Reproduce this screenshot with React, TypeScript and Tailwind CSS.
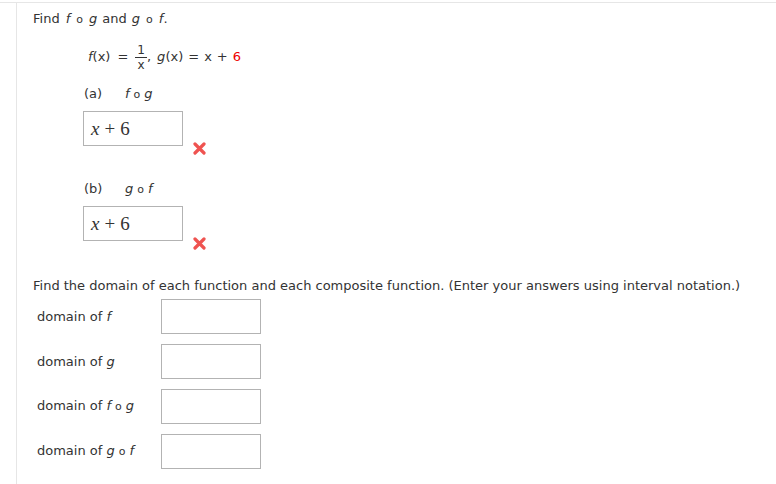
const font = { fontFamily: '"DejaVu Sans", Verdana, sans-serif' }

const Cross = () => (
  <svg width="13" height="13" viewBox="0 0 13 13" className="shrink-0">
    <path d="M2 2L11 11M11 2L2 11" stroke="#ef5350" strokeWidth={3.2} strokeLinecap="round" />
  </svg>
)

const MathAnswer = () => (
  <span className="text-[19px] text-[#333]" style={{ fontFamily: '"Liberation Serif", "Times New Roman", serif' }}>
    <i>x</i>
    <span className="mx-[5px]">+</span>
    6
  </span>
)

const AnswerBox = () => (
  <div className="flex items-end">
    <div className="w-[100px] h-[35px] border border-[#b3b3b3] flex items-center pl-[7px]">
      <MathAnswer />
    </div>
    <div className="ml-[10px] -mb-[9px]">
      <Cross />
    </div>
  </div>
)

const Comp = ({ a, b, wide }: { a: string; b: string; wide?: boolean }) => (
  <>
    <i>{a}</i>
    <span className={wide ? 'text-[11px] mx-[6px]' : 'text-[11px] mx-[4px]'}>o</span>
    <i>{b}</i>
  </>
)

const DomainRow = ({ label }: { label: React.ReactNode }) => (
  <div className="flex items-center h-[35px] mb-[10px]">
    <div className="w-[128px] pl-[4px]">{label}</div>
    <div className="w-[100px] h-[35px] border border-[#b3b3b3]" />
  </div>
)

export default function App() {
  return (
    <div className="min-h-screen bg-white text-[13px] text-[#333] leading-[20px]" style={font}>
      <div className="pt-[2px]">
        <div className="border-t border-[#e6e6e6]">
          <div className="ml-[16px] border-l border-[#e6e6e6] pl-[16px] pt-[6px] min-h-[481px]">
            <div>
              Find <span className="ml-[2px]" /><Comp a="f" b="g" wide />
              <span className="mx-[5px]">and</span>
              <Comp a="g" b="f" wide />.
            </div>

            <div className="ml-[55px] mt-[8px] flex items-center h-[38px]">
              <span><i>f</i>(x)</span>
              <span className="mx-[7px]">=</span>
              <span className="inline-flex flex-col items-center text-[12px] leading-[14px]">
                <span className="border-b border-[#333] px-[2px]">1</span>
                <span>x</span>
              </span>
              <span className="mr-[6px]">,</span>
              <span><i>g</i>(x)</span>
              <span className="mx-[5px]">=</span>
              <span>x</span>
              <span className="mx-[5px]">+</span>
              <span className="text-[#e00]">6</span>
            </div>

            <div className="ml-[51px] mt-[8px] flex">
              <span className="w-[41px]">(a)</span>
              <span><Comp a="f" b="g" /></span>
            </div>
            <div className="ml-[50px] mt-[6px]">
              <AnswerBox />
            </div>

            <div className="ml-[51px] mt-[33px] flex">
              <span className="w-[41px]">(b)</span>
              <span><Comp a="g" b="f" /></span>
            </div>
            <div className="ml-[50px] mt-[6px]">
              <AnswerBox />
            </div>

            <div className="mt-[35px]">
              Find the domain of each function and each composite function. (Enter your answers using interval notation.)
            </div>

            <div className="mt-[3px]">
              <DomainRow label={<>domain of <i>f</i></>} />
              <DomainRow label={<>domain of <i>g</i></>} />
              <DomainRow label={<>domain of <Comp a="f" b="g" /></>} />
              <DomainRow label={<>domain of <Comp a="g" b="f" /></>} />
            </div>
          </div>
        </div>
      </div>
    </div>
  )
}
